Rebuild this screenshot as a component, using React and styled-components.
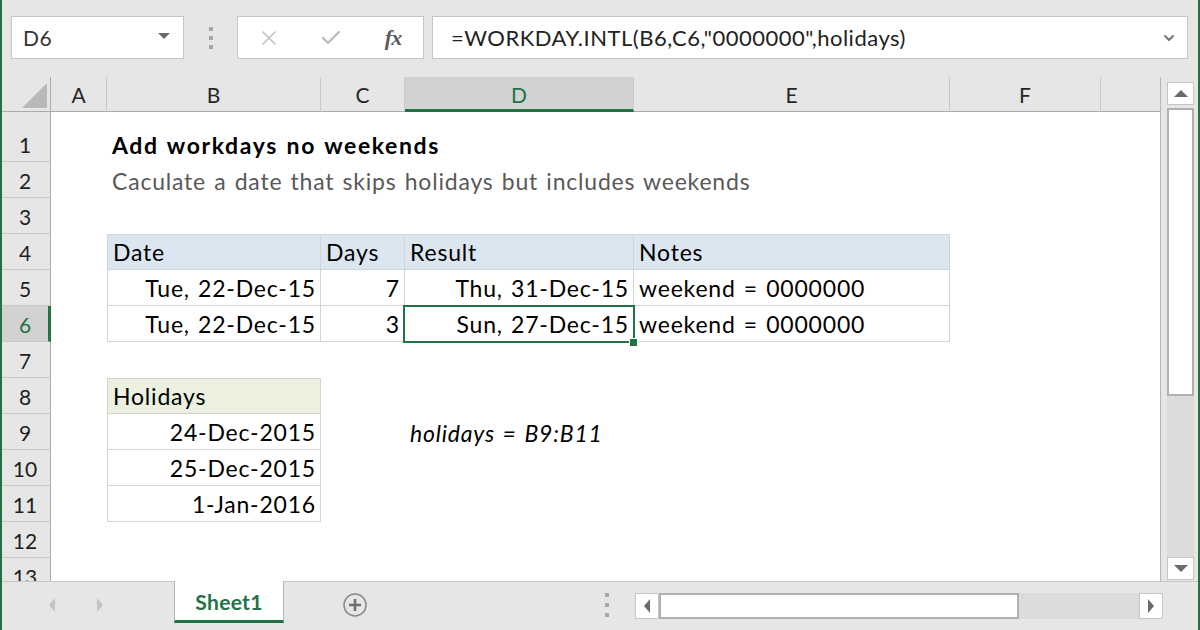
import React from "react";
import styled, { createGlobalStyle, css } from "styled-components";
import { X, Check, ChevronDown } from "lucide-react";

const GlobalStyle = createGlobalStyle`
  html, body {
    margin: 0;
    padding: 0;
    background: #e6e6e6;
  }
  * {
    box-sizing: border-box;
  }
`;

const GREEN = "#217346";
const CELL_FONT = `"Lato", "Liberation Sans", sans-serif`;

const Window = styled.div`
  width: 1200px;
  height: 630px;
  display: flex;
  flex-direction: column;
  background: #e6e6e6;
  border-left: 2px solid ${GREEN};
  border-right: 2px solid ${GREEN};
  overflow: hidden;
  font-family: ${CELL_FONT};
`;

/* ---------- formula bar ---------- */

const TopBar = styled.div`
  height: 77px;
  flex: none;
  display: flex;
  align-items: flex-start;
  padding: 16px 10px 0 9px;
`;

const Field = styled.div`
  height: 43px;
  background: #fff;
  border: 1px solid #c6c6c6;
  display: flex;
  align-items: center;
`;

const NameBox = styled(Field)`
  width: 173px;
  justify-content: space-between;
  padding: 0 13px 0 11px;
  font-size: 21px;
  letter-spacing: 0.5px;
  color: #333;
`;

const DropTriangle = styled.span`
  width: 0;
  height: 0;
  border-left: 6px solid transparent;
  border-right: 6px solid transparent;
  border-top: 6px solid #6a6a6a;
  margin-top: -4px;
`;

const Grip = styled.div`
  width: 53px;
  height: 43px;
  display: flex;
  flex-direction: column;
  align-items: center;
  justify-content: center;
  gap: 5px;
`;

const GripDot = styled.span`
  width: 4px;
  height: 4px;
  background: #a6a6a6;
`;

const FxBox = styled(Field)`
  width: 187px;
  display: grid;
  grid-template-columns: repeat(3, 62px);
  justify-items: center;
  color: #bdbdbd;
`;

const FxLabel = styled.span`
  font-family: "Liberation Serif", serif;
  font-style: italic;
  font-weight: bold;
  font-size: 22px;
  color: #5a5a5a;
  letter-spacing: -1px;
`;

const FormulaBox = styled(Field)`
  flex: 1;
  margin-left: 8px;
  padding: 0 10px 0 18px;
  justify-content: space-between;
  font-size: 22px;
  letter-spacing: 0.5px;
  color: #222;
`;

/* ---------- sheet ---------- */

const Middle = styled.div`
  height: 504px;
  flex: none;
  display: flex;
`;

const Sheet = styled.div`
  width: 1159px;
  height: 504px;
  overflow: hidden;
  background: #fff;
  display: grid;
  grid-template-columns: 49px 56px 214px 84px 229px 316px 151px 60px;
  grid-template-rows: 35px 50px repeat(11, 36px) 36px;
  border-right: 1px solid #b5b5b5;
`;

const ColHead = styled.div`
  background: ${(p) => (p.$active ? "#d2d2d2" : "#e6e6e6")};
  color: ${(p) => (p.$active ? GREEN : "#262626")};
  border-right: 1px solid #c8c8c8;
  border-bottom: ${(p) => (p.$active ? `3px solid ${GREEN}` : "1px solid #ababab")};
  display: flex;
  align-items: center;
  justify-content: center;
  padding-top: ${(p) => (p.$active ? "3px" : "1px")};
  font-size: 21px;
`;

const Corner = styled.div`
  background: #e6e6e6;
  border-right: 1px solid #ababab;
  border-bottom: 1px solid #ababab;
  position: relative;
`;

const CornerTriangle = styled.span`
  position: absolute;
  right: 3px;
  bottom: 3px;
  width: 25px;
  height: 25px;
  background: #b9b9b9;
  clip-path: polygon(100% 0, 100% 100%, 0 100%);
`;

const RowHead = styled.div`
  background: ${(p) => (p.$active ? "#d2d2d2" : "#e6e6e6")};
  color: ${(p) => (p.$active ? GREEN : "#1f1f1f")};
  border-right: ${(p) => (p.$active ? `3px solid ${GREEN}` : "1px solid #ababab")};
  border-bottom: 1px solid #c8c8c8;
  display: flex;
  align-items: flex-end;
  justify-content: center;
  padding: 0 ${(p) => (p.$active ? "0" : "2px")} 4px 0;
  font-size: 21px;
`;

const Cell = styled.div`
  position: relative;
  display: flex;
  align-items: flex-end;
  justify-content: ${(p) => (p.$align === "right" ? "flex-end" : "flex-start")};
  padding: 0 4px 3px 5px;
  white-space: nowrap;
  font-size: 23px;
  letter-spacing: ${(p) => (p.$bold ? "1.6px" : "0.8px")};
  word-spacing: 1.5px;
  color: ${(p) => p.$color || "#000"};
  font-weight: ${(p) => (p.$bold ? 700 : 400)};
  font-style: ${(p) => (p.$italic ? "italic" : "normal")};
  background: ${(p) => p.$bg || "transparent"};
  ${(p) =>
    p.$box &&
    css`
      border-right: 1px solid #d4d4d4;
      border-bottom: 1px solid #d4d4d4;
    `}
  ${(p) => p.$top && "border-top: 1px solid #d4d4d4;"}
  ${(p) => p.$left && "border-left: 1px solid #d4d4d4;"}
  ${(p) =>
    p.$selected &&
    css`
      &::after {
        content: "";
        position: absolute;
        left: -2px;
        top: -1px;
        right: -2px;
        bottom: -2px;
        border: 2px solid ${GREEN};
        z-index: 2;
      }
      &::before {
        content: "";
        position: absolute;
        right: -5px;
        bottom: -6px;
        width: 7px;
        height: 7px;
        background: ${GREEN};
        border: 1px solid #fff;
        z-index: 3;
      }
    `}
`;

/* ---------- vertical scrollbar ---------- */

const VScrollArea = styled.div`
  width: 37px;
  padding: 5px 4px 1px 6px;
  display: flex;
  flex-direction: column;
`;

const ScrollButton = styled.div`
  flex: none;
  width: ${(p) => (p.$horizontal ? "24px" : "100%")};
  height: ${(p) => (p.$horizontal ? "100%" : "23px")};
  background: #fff;
  border: 1px solid #c6c6c6;
  display: flex;
  align-items: center;
  justify-content: center;
`;

const Arrow = styled.span`
  width: 0;
  height: 0;
  ${(p) =>
    p.$dir === "up" &&
    css`
      border-left: 7px solid transparent;
      border-right: 7px solid transparent;
      border-bottom: 7px solid #6a6a6a;
    `}
  ${(p) =>
    p.$dir === "down" &&
    css`
      border-left: 7px solid transparent;
      border-right: 7px solid transparent;
      border-top: 7px solid #6a6a6a;
    `}
  ${(p) =>
    p.$dir === "left" &&
    css`
      border-top: 7px solid transparent;
      border-bottom: 7px solid transparent;
      border-right: 6px solid ${p.$light ? "#c4c4c4" : "#6a6a6a"};
    `}
  ${(p) =>
    p.$dir === "right" &&
    css`
      border-top: 7px solid transparent;
      border-bottom: 7px solid transparent;
      border-left: 6px solid ${p.$light ? "#c4c4c4" : "#6a6a6a"};
    `}
`;

const VThumb = styled.div`
  flex: none;
  height: 288px;
  margin-top: 3px;
  background: #fff;
  border: 2px solid #b0b0b0;
`;

const VTrack = styled.div`
  flex: 1;
  background: #dcdcdc;
`;

/* ---------- sheet tabs ---------- */

const TabBar = styled.div`
  flex: 1;
  display: flex;
  align-items: flex-start;
  border-top: 1px solid #c6c6c6;
`;

const TabNav = styled.div`
  width: 172px;
  height: 46px;
  display: flex;
  align-items: center;
  padding-left: 47px;
  gap: 42px;
`;

const SheetTab = styled.div`
  width: 110px;
  height: 42px;
  margin-top: -1px;
  background: #fff;
  border-left: 1px solid #b5b5b5;
  border-right: 1px solid #b5b5b5;
  border-bottom: 3px solid ${GREEN};
  display: flex;
  align-items: center;
  justify-content: center;
  padding-top: 2px;
  font-family: ${CELL_FONT};
  font-weight: 700;
  font-size: 21px;
  letter-spacing: 0.3px;
  color: ${GREEN};
`;

const AddSheet = styled.div`
  width: 142px;
  height: 46px;
  display: flex;
  align-items: center;
  justify-content: center;
`;

const Spacer = styled.div`
  flex: 1;
`;

const TabGrip = styled(Grip)`
  width: 30px;
  height: 46px;
  gap: 6px;
  margin-right: 13px;
`;

const HScroll = styled.div`
  width: 528px;
  height: 26px;
  margin-top: 11px;
  margin-right: 35px;
  display: flex;
`;

const HThumb = styled.div`
  width: 360px;
  background: #fff;
  border: 2px solid #b0b0b0;
`;

const HTrack = styled.div`
  flex: 1;
  background: #dcdcdc;
`;

/* ---------- data ---------- */

const COLS = ["A", "B", "C", "D", "E", "F", ""];
const ROWS = 13;

const HEAD_BLUE = "#dce6f1";
const HEAD_GREEN = "#ebf1de";

// key "row:col" (col index 0 = A)
const cells = {
  "1:1": { text: "Add workdays no weekends", bold: true },
  "2:1": { text: "Caculate a date that skips holidays but includes weekends", color: "#595959" },
  "4:1": { text: "Date", bg: HEAD_BLUE, box: true, top: true, left: true },
  "4:2": { text: "Days", bg: HEAD_BLUE, box: true, top: true },
  "4:3": { text: "Result", bg: HEAD_BLUE, box: true, top: true },
  "4:4": { text: "Notes", bg: HEAD_BLUE, box: true, top: true },
  "5:1": { text: "Tue, 22-Dec-15", align: "right", box: true, left: true },
  "5:2": { text: "7", align: "right", box: true },
  "5:3": { text: "Thu, 31-Dec-15", align: "right", box: true },
  "5:4": { text: "weekend = 0000000", box: true },
  "6:1": { text: "Tue, 22-Dec-15", align: "right", box: true, left: true },
  "6:2": { text: "3", align: "right", box: true },
  "6:3": { text: "Sun, 27-Dec-15", align: "right", box: true, selected: true },
  "6:4": { text: "weekend = 0000000", box: true },
  "8:1": { text: "Holidays", bg: HEAD_GREEN, box: true, top: true, left: true },
  "9:1": { text: "24-Dec-2015", align: "right", box: true, left: true },
  "9:3": { text: "holidays = B9:B11", italic: true },
  "10:1": { text: "25-Dec-2015", align: "right", box: true, left: true },
  "11:1": { text: "1-Jan-2016", align: "right", box: true, left: true },
};

const ACTIVE_COL = 3;
const ACTIVE_ROW = 6;

function PlusCircle() {
  return (
    <svg width="26" height="26" viewBox="0 0 26 26">
      <circle cx="13" cy="13" r="11" fill="none" stroke="#8c8c8c" strokeWidth="1.6" />
      <path d="M13 7v12M7 13h12" stroke="#6e6e6e" strokeWidth="2.6" />
    </svg>
  );
}

export default function App() {
  const rows = [];
  for (let r = 1; r <= ROWS; r++) {
    rows.push(
      <RowHead key={`h${r}`} $active={r === ACTIVE_ROW}>
        {r}
      </RowHead>
    );
    COLS.forEach((_, c) => {
      const d = cells[`${r}:${c}`] || {};
      rows.push(
        <Cell
          key={`${r}:${c}`}
          $align={d.align}
          $bold={d.bold}
          $italic={d.italic}
          $color={d.color}
          $bg={d.bg}
          $box={d.box}
          $top={d.top}
          $left={d.left}
          $selected={d.selected}
        >
          {d.text}
        </Cell>
      );
    });
  }

  return (
    <>
      <GlobalStyle />
      <Window>
        <TopBar>
          <NameBox>
            D6
            <DropTriangle />
          </NameBox>
          <Grip>
            <GripDot />
            <GripDot />
            <GripDot />
          </Grip>
          <FxBox>
            <X size={24} strokeWidth={1.5} />
            <Check size={24} strokeWidth={2.4} />
            <FxLabel>fx</FxLabel>
          </FxBox>
          <FormulaBox>
            =WORKDAY.INTL(B6,C6,"0000000",holidays)
            <ChevronDown size={16} strokeWidth={3} color="#777" />
          </FormulaBox>
        </TopBar>

        <Middle>
          <Sheet>
            <Corner>
              <CornerTriangle />
            </Corner>
            {COLS.map((c, i) => (
              <ColHead key={`c${i}`} $active={i === ACTIVE_COL}>
                {c}
              </ColHead>
            ))}
            {rows}
          </Sheet>
          <VScrollArea>
            <ScrollButton>
              <Arrow $dir="up" />
            </ScrollButton>
            <VThumb />
            <VTrack />
            <ScrollButton>
              <Arrow $dir="down" />
            </ScrollButton>
          </VScrollArea>
        </Middle>

        <TabBar>
          <TabNav>
            <Arrow $dir="left" $light />
            <Arrow $dir="right" $light />
          </TabNav>
          <SheetTab>Sheet1</SheetTab>
          <AddSheet>
            <PlusCircle />
          </AddSheet>
          <Spacer />
          <TabGrip>
            <GripDot />
            <GripDot />
            <GripDot />
          </TabGrip>
          <HScroll>
            <ScrollButton $horizontal>
              <Arrow $dir="left" />
            </ScrollButton>
            <HThumb />
            <HTrack />
            <ScrollButton $horizontal>
              <Arrow $dir="right" />
            </ScrollButton>
          </HScroll>
        </TabBar>
      </Window>
    </>
  );
}
